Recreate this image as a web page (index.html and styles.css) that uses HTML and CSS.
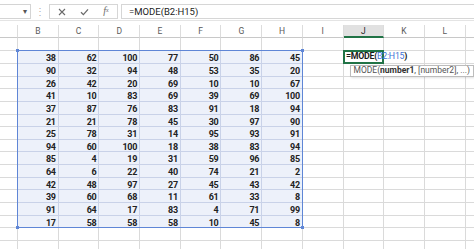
FILE: index.html
```html
<!DOCTYPE html>
<html lang="en">
<head>
    <meta charset="UTF-8">
    <meta name="viewport" content="width=device-width, initial-scale=1.0">
    <title>MODE - Book1</title>
    <link rel="stylesheet" href="styles.css">
</head>
<body>
    <!-- Formula bar -->
    <div class="formula-bar">
        <div class="name-box">
            <span class="arrow">▾</span>
        </div>
        <div class="grip">⋮</div>
        <div class="fx-buttons">
            <span class="btn">
                <svg width="8" height="8" viewBox="0 0 8 8"><path d="M1 1L7 7M7 1L1 7" stroke="#6a6a6a" stroke-width="1.1" fill="none"/></svg>
            </span>
            <span class="btn">
                <svg width="9" height="8" viewBox="0 0 9 8"><path d="M1 4.2L3.4 6.6L8 1.4" stroke="#6a6a6a" stroke-width="1.3" fill="none"/></svg>
            </span>
            <span class="btn fx"><i>f</i><sub>x</sub></span>
        </div>
        <div class="formula-input">=MODE(B2:H15)</div>
    </div>

    <!-- Worksheet, cells are added by the script -->
    <div class="sheet" id="sheet">
        <div class="selection">
            <span class="handle tl"></span>
            <span class="handle tr"></span>
            <span class="handle bl"></span>
            <span class="handle br"></span>
        </div>
        <div class="active-cell">=MODE(<span class="ref">B2:H15</span>)</div>
        <div class="tooltip">MODE(<b>number1</b>, [number2], ...)</div>
    </div>

    <script>
        // A and M are only partly in view, so they get no label
        const columns = ['', 'B', 'C', 'D', 'E', 'F', 'G', 'H', 'I', 'J', 'K', 'L', ''];

        // values of B2:H15
        const data = [
            [38, 62, 100, 77, 50, 86, 45],
            [90, 32, 94, 48, 53, 35, 20],
            [26, 42, 20, 69, 10, 10, 67],
            [41, 10, 83, 69, 39, 69, 100],
            [37, 87, 76, 83, 91, 18, 94],
            [21, 21, 78, 45, 30, 97, 90],
            [25, 78, 31, 14, 95, 93, 91],
            [94, 60, 100, 18, 38, 83, 94],
            [85, 4, 19, 31, 59, 96, 85],
            [64, 6, 22, 40, 74, 21, 2],
            [42, 48, 97, 27, 45, 43, 42],
            [39, 60, 68, 11, 61, 33, 8],
            [91, 64, 17, 83, 4, 71, 99],
            [17, 58, 58, 58, 10, 45, 8]
        ];

        const sheet = document.getElementById('sheet');
        const fragment = document.createDocumentFragment();

        function place(el, row, col) {
            el.style.gridRow = row;
            el.style.gridColumn = col;
            fragment.appendChild(el);
        }

        // column headers
        columns.forEach((name, c) => {
            const head = document.createElement('div');
            head.className = 'col-head';
            if (name === 'J') head.classList.add('active');
            head.textContent = name;
            place(head, 1, c + 1);
        });

        // rows 1 to 17
        for (let r = 1; r <= 17; r++) {
            const values = data[r - 2];
            columns.forEach((name, c) => {
                const cell = document.createElement('div');
                cell.className = 'cell';
                if (values && c >= 1 && c <= 7) {
                    cell.classList.add('in-range');
                    cell.textContent = values[c - 1];
                }
                place(cell, r + 1, c + 1);
            });
        }

        sheet.prepend(fragment);
    </script>
</body>
</html>
```

FILE: styles.css
```css
/* Excel-like sheet */
body {
    margin: 0;
    width: 474px;
    height: 249px;
    overflow: hidden;
    background-color: #fff;
    font-family: Roboto, "Open Sans", sans-serif;
}

.formula-bar {
    display: flex;
    align-items: flex-start;
    height: 21px;
    padding-top: 4px;
    box-sizing: border-box;
    border-bottom: 1px solid #e4e4e4;
    margin-bottom: 4px;
}

.name-box {
    margin-left: -12px;
    width: 43px;
    height: 15px;
    box-sizing: border-box;
    border: 1px solid #d4d4d4;
    display: flex;
    align-items: center;
    justify-content: flex-end;
    padding: 0 3px 0 2px;
    font-size: 9px;
    color: #444;
}

.name-box .arrow {
    font-size: 8px;
    color: #555;
}

.grip {
    width: 18px;
    text-align: center;
    font-size: 10px;
    line-height: 15px;
    color: #b0b0b0;
}

.fx-buttons {
    width: 69px;
    height: 15px;
    box-sizing: border-box;
    border: 1px solid #d6d6d6;
    display: flex;
    align-items: center;
    padding-left: 1px;
}

.btn {
    width: 22.5px;
    display: flex;
    justify-content: center;
    align-items: center;
    height: 13px;
}

.btn.fx {
    font-family: "Liberation Serif", serif;
    color: #6a6a6a;
    font-size: 10px;
    align-items: flex-start;
    line-height: 11px;
}

.btn.fx sub {
    font-size: 6px;
    font-style: italic;
    vertical-align: -1px;
}

.formula-input {
    flex: 1;
    margin-left: 3px;
    height: 15px;
    box-sizing: border-box;
    border: 1px solid #d6d6d6;
    border-right: none;
    padding-left: 7px;
    font-size: 9.5px;
    line-height: 14px;
    color: #222;
}

.sheet {
    display: grid;
    grid-template-columns: 18px repeat(12, 40.7px);
    grid-template-rows: 13px 13.3px repeat(16, 12.65px);
}

.col-head {
    box-sizing: border-box;
    border-right: 1px solid #dcdcdc;
    border-bottom: 1px solid #c8c8c8;
    text-align: center;
    font-size: 8.5px;
    line-height: 12px;
    color: #5a5a5a;
}

.col-head.active {
    background-color: #e1e1e1;
    border-bottom: 2px solid #217346;
    color: #262626;
}

.cell {
    box-sizing: border-box;
    border-right: 1px solid #dadada;
    border-bottom: 1px solid #dadada;
    text-align: right;
    padding: 2px 2px 0 0;
    font-size: 9px;
    font-weight: bold;
    line-height: 10px;
    letter-spacing: -0.3px;
    color: #222;
}

.cell.in-range {
    background-color: #edf1fa;
    border-color: #c9d2e8;
}

.selection {
    grid-column: 2 / 9;
    grid-row: 3 / 17;
    margin: -1px 0 0 -1px;
    border: 1px solid #5f86d6;
    position: relative;
    z-index: 1;
}

.handle {
    position: absolute;
    width: 3px;
    height: 3px;
    background-color: #5f86d6;
}

.handle.tl { left: -2px; top: -2px; }
.handle.tr { right: -2px; top: -2px; }
.handle.bl { left: -2px; bottom: -2px; }
.handle.br { right: -2px; bottom: -2px; }

.active-cell {
    grid-column: 10;
    grid-row: 3;
    margin: -1px 0 0 -1px;
    border: 2px solid #217346;
    background-color: #fff;
    z-index: 2;
    white-space: nowrap;
    padding-left: 1.5px;
    font-size: 8.8px;
    font-weight: bold;
    line-height: 9px;
    letter-spacing: -0.25px;
    color: #1a1a1a;
}

.active-cell .ref {
    color: #3f72d6;
    font-weight: normal;
}

.tooltip {
    grid-column: 10 / 14;
    grid-row: 4;
    justify-self: start;
    align-self: start;
    margin: 1.5px 0 0 6px;
    height: 11.5px;
    box-sizing: border-box;
    border: 1px solid #bcbcbc;
    background-color: #fff;
    padding: 0 3px;
    font-size: 8.5px;
    line-height: 9.5px;
    color: #555;
    white-space: nowrap;
    z-index: 3;
    box-shadow: 1px 1px 2px rgba(0, 0, 0, 0.12);
}

.tooltip b {
    color: #333;
}
```
